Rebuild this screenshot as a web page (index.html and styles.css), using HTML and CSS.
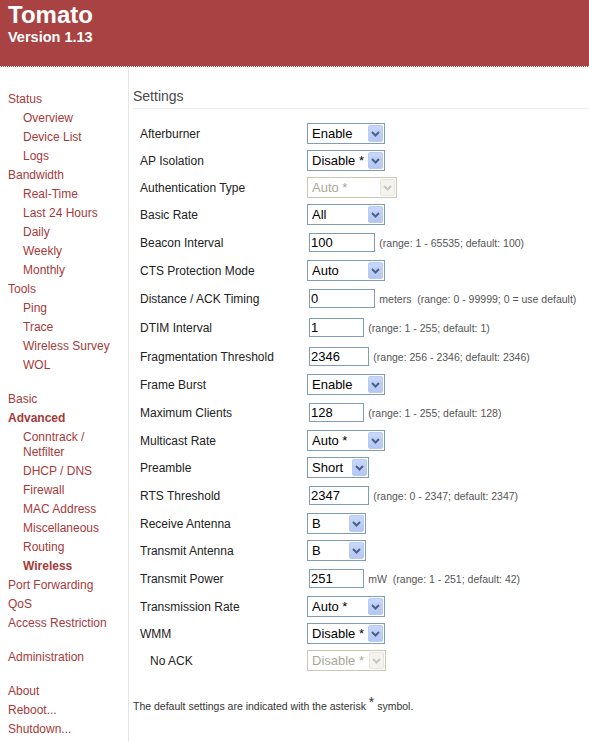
FILE: index.html
```
<!DOCTYPE html>
<html lang="en">
<head>
    <meta charset="UTF-8">
    <title>[Tomato]: Advanced: Wireless</title>
    <link rel="stylesheet" href="styles.css">
</head>
<body>
    <div class="header">
        <div class="title">Tomato</div>
        <div class="version">Version 1.13</div>
    </div>

    <div class="page">
        <div class="nav">
            <a class="top" href="#">Status</a>
            <a class="sub" href="#">Overview</a>
            <a class="sub" href="#">Device List</a>
            <a class="sub" href="#">Logs</a>
            <a class="top" href="#">Bandwidth</a>
            <a class="sub" href="#">Real-Time</a>
            <a class="sub" href="#">Last 24 Hours</a>
            <a class="sub" href="#">Daily</a>
            <a class="sub" href="#">Weekly</a>
            <a class="sub" href="#">Monthly</a>
            <a class="top" href="#">Tools</a>
            <a class="sub" href="#">Ping</a>
            <a class="sub" href="#">Trace</a>
            <a class="sub" href="#">Wireless Survey</a>
            <a class="sub" href="#">WOL</a>
            <a class="top gap" href="#">Basic</a>
            <a class="top active" href="#">Advanced</a>
            <a class="sub" href="#">Conntrack /<br>Netfilter</a>
            <a class="sub" href="#">DHCP / DNS</a>
            <a class="sub" href="#">Firewall</a>
            <a class="sub" href="#">MAC Address</a>
            <a class="sub" href="#">Miscellaneous</a>
            <a class="sub" href="#">Routing</a>
            <a class="sub active" href="#">Wireless</a>
            <a class="top" href="#">Port Forwarding</a>
            <a class="top" href="#">QoS</a>
            <a class="top" href="#">Access Restriction</a>
            <a class="top gap" href="#">Administration</a>
            <a class="top gap" href="#">About</a>
            <a class="top" href="#">Reboot...</a>
            <a class="top" href="#">Shutdown...</a>
        </div>

        <div class="content">
            <div class="section-title">Settings</div>

            <div class="fields">
                <div class="row">
                    <div class="label">Afterburner</div>
                    <div class="select w78"><span class="value">Enable</span><span class="btn"><svg width="9" height="6" viewBox="0 0 9 6"><path d="M1 1 L4.5 4.5 L8 1" fill="none" stroke-width="2"/></svg></span></div>
                </div>
                <div class="row">
                    <div class="label">AP Isolation</div>
                    <div class="select w78"><span class="value">Disable *</span><span class="btn"><svg width="9" height="6" viewBox="0 0 9 6"><path d="M1 1 L4.5 4.5 L8 1" fill="none" stroke-width="2"/></svg></span></div>
                </div>
                <div class="row">
                    <div class="label">Authentication Type</div>
                    <div class="select w90 disabled"><span class="value">Auto *</span><span class="btn"><svg width="9" height="6" viewBox="0 0 9 6"><path d="M1 1 L4.5 4.5 L8 1" fill="none" stroke-width="2"/></svg></span></div>
                </div>
                <div class="row">
                    <div class="label">Basic Rate</div>
                    <div class="select w78"><span class="value">All</span><span class="btn"><svg width="9" height="6" viewBox="0 0 9 6"><path d="M1 1 L4.5 4.5 L8 1" fill="none" stroke-width="2"/></svg></span></div>
                </div>
                <div class="row tall">
                    <div class="label">Beacon Interval</div>
                    <div class="ctl"><input class="text w66" type="text" value="100"> <span class="hint">(range: 1 - 65535; default: 100)</span></div>
                </div>
                <div class="row">
                    <div class="label">CTS Protection Mode</div>
                    <div class="select w78"><span class="value">Auto</span><span class="btn"><svg width="9" height="6" viewBox="0 0 9 6"><path d="M1 1 L4.5 4.5 L8 1" fill="none" stroke-width="2"/></svg></span></div>
                </div>
                <div class="row tall">
                    <div class="label">Distance / ACK Timing</div>
                    <div class="ctl"><input class="text w66" type="text" value="0"> <span class="hint">meters &nbsp;(range: 0 - 99999; 0 = use default)</span></div>
                </div>
                <div class="row tall">
                    <div class="label">DTIM Interval</div>
                    <div class="ctl"><input class="text w55" type="text" value="1"> <span class="hint">(range: 1 - 255; default: 1)</span></div>
                </div>
                <div class="row tall">
                    <div class="label">Fragmentation Threshold</div>
                    <div class="ctl"><input class="text w60" type="text" value="2346"> <span class="hint">(range: 256 - 2346; default: 2346)</span></div>
                </div>
                <div class="row">
                    <div class="label">Frame Burst</div>
                    <div class="select w78"><span class="value">Enable</span><span class="btn"><svg width="9" height="6" viewBox="0 0 9 6"><path d="M1 1 L4.5 4.5 L8 1" fill="none" stroke-width="2"/></svg></span></div>
                </div>
                <div class="row tall">
                    <div class="label">Maximum Clients</div>
                    <div class="ctl"><input class="text w55" type="text" value="128"> <span class="hint">(range: 1 - 255; default: 128)</span></div>
                </div>
                <div class="row">
                    <div class="label">Multicast Rate</div>
                    <div class="select w78"><span class="value">Auto *</span><span class="btn"><svg width="9" height="6" viewBox="0 0 9 6"><path d="M1 1 L4.5 4.5 L8 1" fill="none" stroke-width="2"/></svg></span></div>
                </div>
                <div class="row">
                    <div class="label">Preamble</div>
                    <div class="select w62"><span class="value">Short</span><span class="btn"><svg width="9" height="6" viewBox="0 0 9 6"><path d="M1 1 L4.5 4.5 L8 1" fill="none" stroke-width="2"/></svg></span></div>
                </div>
                <div class="row tall">
                    <div class="label">RTS Threshold</div>
                    <div class="ctl"><input class="text w60" type="text" value="2347"> <span class="hint">(range: 0 - 2347; default: 2347)</span></div>
                </div>
                <div class="row">
                    <div class="label">Receive Antenna</div>
                    <div class="select w59"><span class="value">B</span><span class="btn"><svg width="9" height="6" viewBox="0 0 9 6"><path d="M1 1 L4.5 4.5 L8 1" fill="none" stroke-width="2"/></svg></span></div>
                </div>
                <div class="row">
                    <div class="label">Transmit Antenna</div>
                    <div class="select w59"><span class="value">B</span><span class="btn"><svg width="9" height="6" viewBox="0 0 9 6"><path d="M1 1 L4.5 4.5 L8 1" fill="none" stroke-width="2"/></svg></span></div>
                </div>
                <div class="row tall">
                    <div class="label">Transmit Power</div>
                    <div class="ctl"><input class="text w55" type="text" value="251"> <span class="hint">mW &nbsp;(range: 1 - 251; default: 42)</span></div>
                </div>
                <div class="row">
                    <div class="label">Transmission Rate</div>
                    <div class="select w78"><span class="value">Auto *</span><span class="btn"><svg width="9" height="6" viewBox="0 0 9 6"><path d="M1 1 L4.5 4.5 L8 1" fill="none" stroke-width="2"/></svg></span></div>
                </div>
                <div class="row">
                    <div class="label">WMM</div>
                    <div class="select w78"><span class="value">Disable *</span><span class="btn"><svg width="9" height="6" viewBox="0 0 9 6"><path d="M1 1 L4.5 4.5 L8 1" fill="none" stroke-width="2"/></svg></span></div>
                </div>
                <div class="row">
                    <div class="label indent">No ACK</div>
                    <div class="select w79 disabled"><span class="value">Disable *</span><span class="btn"><svg width="9" height="6" viewBox="0 0 9 6"><path d="M1 1 L4.5 4.5 L8 1" fill="none" stroke-width="2"/></svg></span></div>
                </div>
            </div>

            <div class="note">The default settings are indicated with the asterisk <span class="star">*</span> symbol.</div>
        </div>
    </div>
</body>
</html>
```

FILE: styles.css
```
* { margin: 0; padding: 0; box-sizing: border-box; }
body { font-family: 'Liberation Sans', Arial, sans-serif; font-size: 12px; color: #222; background: #fff; }

/* red banner */
.header { background: #a94343; height: 67px; padding: 2px 8px 0; color: #fff; border-bottom: 1px dotted #fff; }
.title { font-size: 24px; font-weight: 700; line-height: 26px; }
.version { font-size: 14.5px; font-weight: 700; line-height: 18px; }

.page { display: flex; min-height: 675px; }

/* left menu */
.nav { width: 128px; flex-shrink: 0; padding-top: 23px; }
.nav a { display: block; color: #a53a3a; text-decoration: none; line-height: 15px; padding: 2px 0; }
.nav a.top { padding-left: 8px; }
.nav a.sub { padding-left: 23px; }
.nav a.gap { margin-top: 15px; }
.nav a.active { font-weight: 700; }

/* settings panel */
.content { flex: 1; border-left: 1px solid #e6e6e6; padding-left: 4px; }
.section-title { font-size: 14px; color: #4a4a4a; line-height: 17px; margin-top: 21px; padding-bottom: 3px; border-bottom: 1px solid #ececec; }
.fields { padding: 11px 0 0 7px; }
.row { display: flex; align-items: center; height: 27px; }
.row.tall { height: 29px; }
.label { width: 167px; flex-shrink: 0; }
.label.indent { padding-left: 10px; }

/* XP style drop-downs */
.select { display: flex; align-items: center; justify-content: space-between; height: 21px; border: 1px solid #7f9db9; background: #fff; padding: 0 1px 0 4px; font-size: 13px; color: #000; }
.select .btn { width: 15px; height: 17px; border-radius: 2px; background: linear-gradient(#c8d8fc, #b4c7f3); border: 1px solid #b9cbf5; display: flex; align-items: center; justify-content: center; }
.select .btn svg path { stroke: #4d6185; }
.select.disabled { border-color: #c9c7ba; color: #aca899; }
.select.disabled .btn { background: #f4f3ee; border-color: #e8e6dc; }
.select.disabled .btn svg path { stroke: #c9c7ba; }
.w59 { width: 59px; }
.w62 { width: 62px; }
.w78 { width: 78px; }
.w79 { width: 79px; }
.w90 { width: 90px; }

/* text inputs */
.ctl { padding-left: 2px; white-space: nowrap; }
.text { height: 19px; border: 1px solid #7f9db9; font-family: inherit; font-size: 13px; padding: 0 1px; color: #000; vertical-align: baseline; line-height: 15px; }
.w55 { width: 55px; }
.w60 { width: 60px; }
.w66 { width: 66px; }
.hint { font-size: 10.5px; color: #555; margin-left: 1px; }

.note { font-size: 10.5px; color: #333; margin-top: 26px; line-height: 12px; }
.note .star { font-size: 14px; position: relative; top: -3px; line-height: 0; }
```
